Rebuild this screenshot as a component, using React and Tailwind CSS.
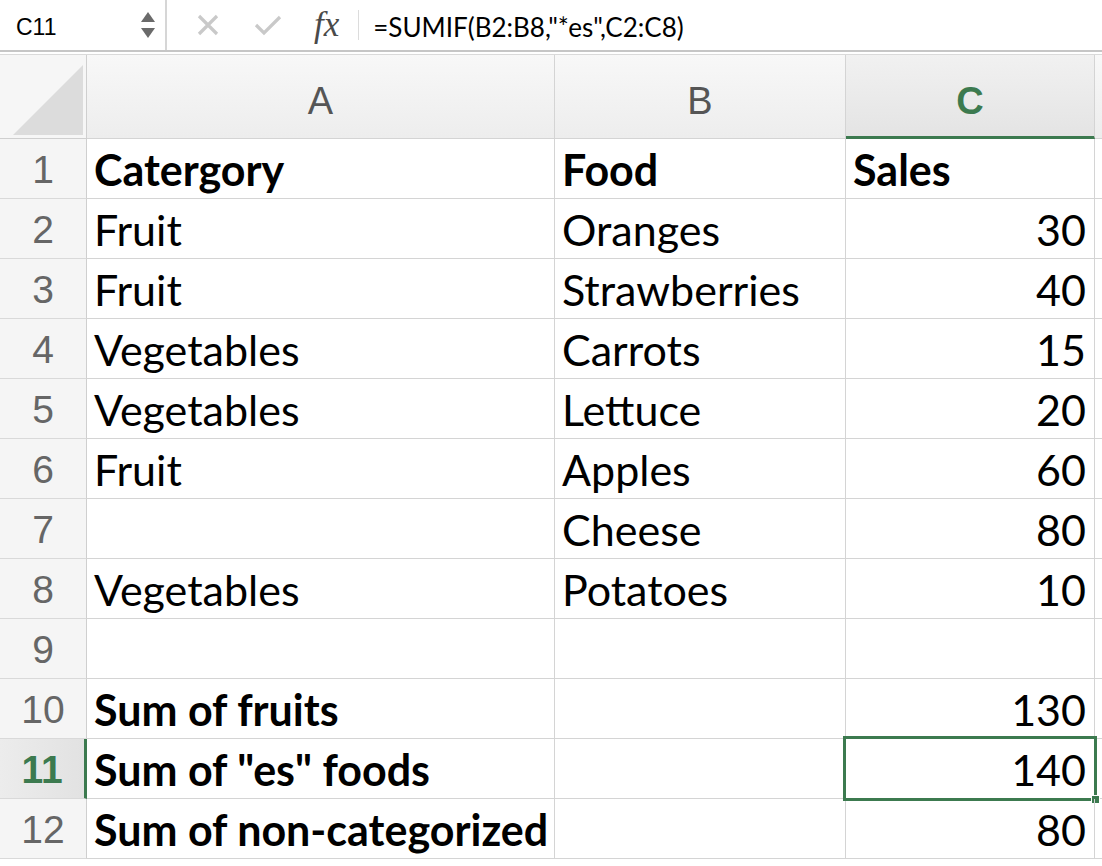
import React from 'react';

const rows = [
  { n: 1, a: 'Catergory', b: 'Food', c: 'Sales', bold: true, cText: true },
  { n: 2, a: 'Fruit', b: 'Oranges', c: '30' },
  { n: 3, a: 'Fruit', b: 'Strawberries', c: '40' },
  { n: 4, a: 'Vegetables', b: 'Carrots', c: '15' },
  { n: 5, a: 'Vegetables', b: 'Lettuce', c: '20' },
  { n: 6, a: 'Fruit', b: 'Apples', c: '60' },
  { n: 7, a: '', b: 'Cheese', c: '80' },
  { n: 8, a: 'Vegetables', b: 'Potatoes', c: '10' },
  { n: 9, a: '', b: '', c: '' },
  { n: 10, a: 'Sum of fruits', b: '', c: '130', boldA: true },
  { n: 11, a: 'Sum of "es" foods', b: '', c: '140', boldA: true, active: true },
  { n: 12, a: 'Sum of non-categorized', b: '', c: '80', boldA: true },
];

const cellFont = { fontFamily: 'Lato, "Open Sans", sans-serif' };

const FormulaBar = () => (
  <div className="flex h-[52px] border-b-2 border-[#c6c6c6] bg-white">
    <div className="w-[167px] flex items-center border-r-2 border-[#d6d6d6] pl-[16px] pr-[10px] pt-[4px]">
      <span className="flex-1 text-[23px] text-black font-['Liberation_Sans',sans-serif]">C11</span>
      <div className="flex flex-col gap-[6px] pb-[4px]">
        <svg width="14" height="10" viewBox="0 0 14 10"><path d="M7 0 L14 10 L0 10 Z" fill="#6a6a6a" /></svg>
        <svg width="14" height="10" viewBox="0 0 14 10"><path d="M0 0 L14 0 L7 10 Z" fill="#6a6a6a" /></svg>
      </div>
    </div>
    <div className="flex items-center pl-[29px]">
      <svg width="24" height="24" viewBox="0 0 24 24" className="mr-[34px]">
        <path d="M3 3 L21 21 M21 3 L3 21" stroke="#c9c9c9" strokeWidth="3.2" />
      </svg>
      <svg width="28" height="22" viewBox="0 0 28 22" className="mr-[32px]">
        <path d="M2 11 L10 19 L26 3" stroke="#c9c9c9" strokeWidth="3.2" fill="none" />
      </svg>
      <span className="italic text-[35px] text-[#4a4a4a] font-['Liberation_Serif',serif] mr-[19px] leading-none pb-[2px]">fx</span>
      <div className="w-px h-[30px] bg-[#dcdcdc] mr-[14px]" />
      <span className="text-[26px] text-black pt-[5px]" style={cellFont}>=SUMIF(B2:B8,"*es",C2:C8)</span>
    </div>
  </div>
);

const HeaderRow = () => (
  <div className="flex h-[85px] mt-[2px] border-t border-[#dadada]">
    <div className="w-[87px] shrink-0 border-r border-b border-[#cfcfcf] bg-[#f6f6f6] flex items-end justify-end p-[3px]">
      <svg width="70" height="70" viewBox="0 0 70 70"><path d="M70 0 L70 70 L0 70 Z" fill="#dcdcdc" /></svg>
    </div>
    {[
      ['A', 'w-[468px]'],
      ['B', 'w-[291px]'],
    ].map(([l, w]) => (
      <div key={l} className={`${w} shrink-0 border-r border-b border-[#d4d4d4] bg-gradient-to-b from-[#f8f8f8] to-[#ededed] flex items-center justify-center pt-[10px] text-[38px] text-[#555] font-['Liberation_Sans',sans-serif]`}>{l}</div>
    ))}
    <div className="w-[249px] shrink-0 border-r border-[#d4d4d4] border-b-[3px] border-b-[#3c7a4f] bg-gradient-to-b from-[#f1f1f1] to-[#e4e4e4] flex items-center justify-center text-[38px] font-bold text-[#3c7a4f] font-['Liberation_Sans',sans-serif] pt-[12px]">C</div>
    <div className="flex-1 border-b border-[#d4d4d4] bg-gradient-to-b from-[#f8f8f8] to-[#ededed]" />
  </div>
);

const Row = ({ r }) => (
  <div className="flex h-[60px]">
    <div className={`w-[87px] shrink-0 border-b border-[#d9d9d9] flex items-center justify-center pt-[4px] text-[39px] font-['Liberation_Sans',sans-serif] ${r.active ? 'bg-gradient-to-r from-[#ececec] to-[#e2e2e2] text-[#3c7a4f] font-bold border-r-[3px] border-r-[#3c7a4f]' : 'bg-[#f5f5f5] text-[#666] border-r border-r-[#cfcfcf]'}`}>{r.n}</div>
    <div className={`w-[468px] shrink-0 border-r border-b border-[#d4d4d4] flex items-center pl-[7px] pt-[4px] text-[43px] text-black ${r.bold || r.boldA ? 'font-bold' : ''}`} style={cellFont}>{r.a}</div>
    <div className={`w-[291px] shrink-0 border-r border-b border-[#d4d4d4] flex items-center pl-[7px] pt-[4px] text-[43px] text-black ${r.bold ? 'font-bold' : ''}`} style={cellFont}>{r.b}</div>
    <div className={`relative w-[249px] shrink-0 border-r border-b border-[#d4d4d4] flex items-center pt-[4px] text-[43px] text-black ${r.cText ? 'pl-[7px] font-bold' : 'justify-end pr-[8px]'}`} style={cellFont}>
      {r.c}
      {r.active && (
        <>
          <div className="absolute left-[-3px] top-[-3px] right-[-3px] bottom-[-3px] border-[3px] border-[#3c7a4f]" />
          <div className="absolute right-[-6px] bottom-[-6px] w-[9px] h-[9px] bg-[#3c7a4f] border border-white" />
        </>
      )}
    </div>
    <div className="flex-1 border-b border-[#d4d4d4]" />
  </div>
);

export default function App() {
  return (
    <div className="w-[1102px] h-[866px] overflow-hidden bg-white">
      <FormulaBar />
      <HeaderRow />
      {rows.map((r) => <Row key={r.n} r={r} />)}
    </div>
  );
}
